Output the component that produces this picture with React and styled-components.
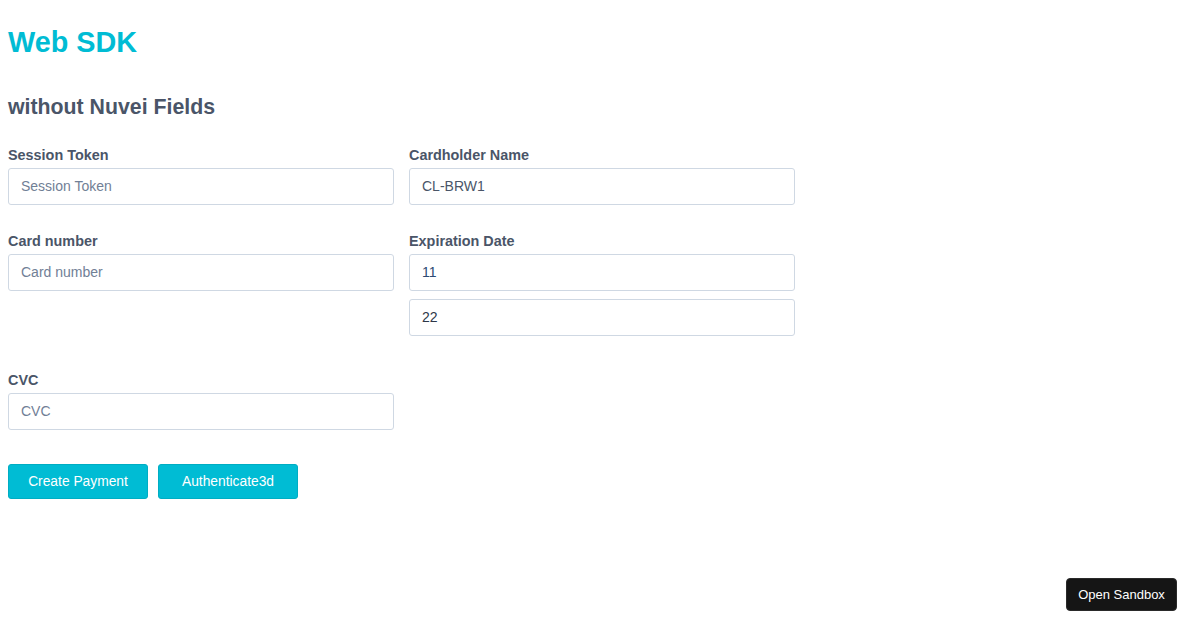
import React from "react";
import styled, { createGlobalStyle } from "styled-components";

const Global = createGlobalStyle`
  html, body { margin: 0; padding: 0; background: #fff; }
  body { font-family: "Liberation Sans", Arial, sans-serif; color: #4a5568; }
  * { box-sizing: border-box; }
`;

const Page = styled.div`
  padding: 0 8px 8px;
`;

const Title = styled.h1`
  margin: 26px 0 0;
  font-size: 28.8px;
  line-height: 32px;
  font-weight: 700;
  color: #00bcd4;
`;

const Subtitle = styled.h2`
  margin: 37px 0 0;
  font-size: 21.3px;
  line-height: 24px;
  font-weight: 700;
  color: #4a5568;
`;

const FormGrid = styled.div`
  margin-top: 28px;
  display: grid;
  grid-template-columns: 386px 386px;
  column-gap: 15px;
  row-gap: 28px;
  align-items: start;
`;

const Field = styled.div`
  display: flex;
  flex-direction: column;
  margin-top: ${(p) => p.$offset || 0}px;
`;

const Label = styled.label`
  display: block;
  font-size: 14.4px;
  line-height: 17px;
  font-weight: 700;
  color: #4a5568;
  margin-bottom: 4px;
`;

const Stack = styled.div`
  display: flex;
  flex-direction: column;
  gap: 8px;
`;

const Input = styled.input`
  width: 100%;
  height: 37px;
  padding: 0 12px 2px;
  border: 1px solid #cfd8e3;
  border-radius: 3px;
  font-family: "Liberation Sans", Arial, sans-serif;
  font-size: 14px;
  color: ${(p) => p.$tone || "#4a5568"};
  background: #fff;
  outline: none;
  &::placeholder { color: #718096; opacity: 1; }
`;

const Actions = styled.div`
  margin-top: 34px;
  display: flex;
  gap: 10px;
`;

const Button = styled.button`
  width: 140px;
  height: 35px;
  background: #00bcd4;
  border: 1px solid #00adc3;
  border-radius: 3px;
  color: #fff;
  font-family: "Liberation Sans", Arial, sans-serif;
  font-size: 13.8px;
  cursor: pointer;
  padding: 0;
`;

const SandboxButton = styled.button`
  position: fixed;
  right: 23px;
  bottom: 19px;
  width: 111px;
  height: 33px;
  background: #151515;
  border: 1px solid #2a2a2a;
  border-radius: 4px;
  color: #fff;
  font-family: "Liberation Sans", Arial, sans-serif;
  font-size: 13px;
  padding: 0;
`;

export default function App() {
  return (
    <>
      <Global />
      <Page>
        <Title>Web SDK</Title>
        <Subtitle>without Nuvei Fields</Subtitle>
        <FormGrid>
          <Field>
            <Label>Session Token</Label>
            <Input placeholder="Session Token" />
          </Field>
          <Field>
            <Label>Cardholder Name</Label>
            <Input defaultValue="CL-BRW1" />
          </Field>
          <Field>
            <Label>Card number</Label>
            <Input placeholder="Card number" />
          </Field>
          <Field>
            <Label>Expiration Date</Label>
            <Stack>
              <Input defaultValue="11" $tone="#2d4a73" />
              <Input defaultValue="22" $tone="#2d3748" />
            </Stack>
          </Field>
          <Field $offset={8}>
            <Label>CVC</Label>
            <Input placeholder="CVC" />
          </Field>
        </FormGrid>
        <Actions>
          <Button>Create Payment</Button>
          <Button>Authenticate3d</Button>
        </Actions>
      </Page>
      <SandboxButton>Open Sandbox</SandboxButton>
    </>
  );
}
